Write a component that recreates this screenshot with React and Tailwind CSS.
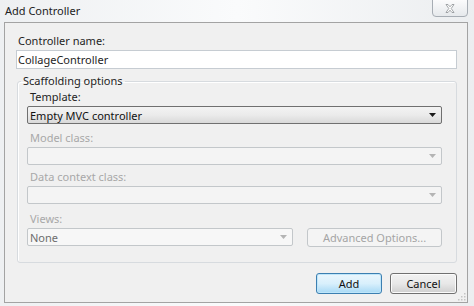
import React from "react";

const font = { fontFamily: '"Noto Sans", "Open Sans", sans-serif' };

function Arrow({ disabled }) {
  return (
    <svg width="7" height="4" viewBox="0 0 7 4" className="shrink-0">
      <path d="M0 0h7L3.5 4z" fill={disabled ? "#b4b4b4" : "#1a1a1a"} />
    </svg>
  );
}

function Select({ value, disabled, className = "" }) {
  const base = disabled
    ? "border-[#c3c7ca] bg-[#f4f4f4] text-[#6d6d6d]"
    : "border-[#707070] bg-gradient-to-b from-[#f3f3f3] via-[#ebebeb] to-[#d9d9d9] text-[#111]";
  return (
    <div
      className={`flex h-[18px] items-center justify-between rounded-[2px] border pl-[2px] pr-[5px] ${base} ${className}`}
    >
      <span className="whitespace-nowrap leading-[15px]">{value}</span>
      <Arrow disabled={disabled} />
    </div>
  );
}

function Field({ label, disabled, children, className = "" }) {
  return (
    <div className={`flex flex-col ${className}`}>
      <span
        className={`ml-[3px] h-[16px] leading-[16px] ${disabled ? "text-[#a8a8a8]" : "text-[#1e1e1e]"}`}
      >
        {label}
      </span>
      <div className="mt-[1px]">{children}</div>
    </div>
  );
}

export default function App() {
  return (
    <div
      className="flex h-[306px] w-[474px] flex-col overflow-hidden bg-gradient-to-r from-[#eef0f2] via-[#fafbfc] to-[#eceef0] text-[11px] text-[#1e1e1e]"
      style={font}
    >
      {/* title bar */}
      <div className="flex h-[22px] shrink-0 items-start justify-between pl-[5px] pr-[6px]">
        <span className="mt-[3px] text-[11px] leading-[16px] text-[#222]">Add Controller</span>
        <div className="-mt-[1px] flex h-[18px] w-[36px] items-center justify-center rounded-b-[4px] border border-[#a7adb4] bg-gradient-to-b from-[#fbfbfc] to-[#e6e9ec]">
          <svg width="10" height="9" viewBox="0 0 10 9">
            <path
              d="M1 0.5h2l2 2.3 2-2.3h2L6.2 4.5 9 8.5H7L5 6.2 3 8.5H1l2.8-4z"
              fill="#fff"
              stroke="#8c8f93"
              strokeWidth="0.8"
              strokeLinejoin="round"
            />
          </svg>
        </div>
      </div>

      {/* client area */}
      <div className="relative ml-[4px] h-[281px] w-[464px] border border-[#a3a3a3] bg-[#f0f0f0] pl-[11px] pr-[10px] pt-[10px]">
        <div className="ml-[2px] h-[16px] leading-[16px]">Controller name:</div>
        <div className="mt-[1px] flex h-[19px] items-center border border-[#c6ccd2] bg-white pl-[1px] leading-[15px]">
          CollageController
        </div>

        <fieldset className="ml-[1px] mt-[4px] h-[190px] rounded-[3px] border border-[#d7dbdf] pl-[9px] pr-[14px] shadow-[inset_1px_1px_0_#fff]">
          <legend className="-ml-[6px] h-[16px] px-[2px] leading-[16px]">Scaffolding options</legend>

          <Field label="Template:">
            <Select value="Empty MVC controller" />
          </Field>

          <Field label="Model class:" disabled className="mt-[6px]">
            <Select value="" disabled />
          </Field>

          <Field label="Data context class:" disabled className="mt-[4px]">
            <Select value="" disabled />
          </Field>

          <Field label="Views:" disabled className="mt-[7px]">
            <div className="flex gap-[14px]">
              <Select value="None" disabled className="w-[266px] bg-[#f7f7f7]" />
              <div className="flex h-[19px] flex-1 items-center justify-center rounded-[3px] border border-[#c3c7ca] bg-[#f4f4f4] leading-[15px] text-[#a5a5a5]">
                Advanced Options...
              </div>
            </div>
          </Field>
        </fieldset>

        <div className="mt-[10px] flex justify-end gap-[8px]">
          <button className="h-[21px] w-[66px] rounded-[3px] border border-[#3c7fb1] bg-gradient-to-b from-[#eaf6fd] via-[#d9f0fc] to-[#a7d9f5] leading-[15px] text-[#111] shadow-[inset_0_0_0_1px_#bfe6fa]">
            Add
          </button>
          <button className="h-[21px] w-[67px] rounded-[3px] border border-[#707070] bg-gradient-to-b from-[#f2f2f2] via-[#e8e8e8] to-[#cfcfcf] leading-[15px] text-[#111] shadow-[inset_0_0_0_1px_#fbfbfb]">
            Cancel
          </button>
        </div>

        {/* resize grip */}
        <svg width="8" height="8" viewBox="0 0 8 8" className="absolute bottom-[1px] right-[1px]">
          <g fill="#c4c4c4">
            <rect x="6" y="0" width="1.5" height="1.5" />
            <rect x="3" y="3" width="1.5" height="1.5" />
            <rect x="6" y="3" width="1.5" height="1.5" />
            <rect x="0" y="6" width="1.5" height="1.5" />
            <rect x="3" y="6" width="1.5" height="1.5" />
            <rect x="6" y="6" width="1.5" height="1.5" />
          </g>
        </svg>
      </div>
    </div>
  );
}
